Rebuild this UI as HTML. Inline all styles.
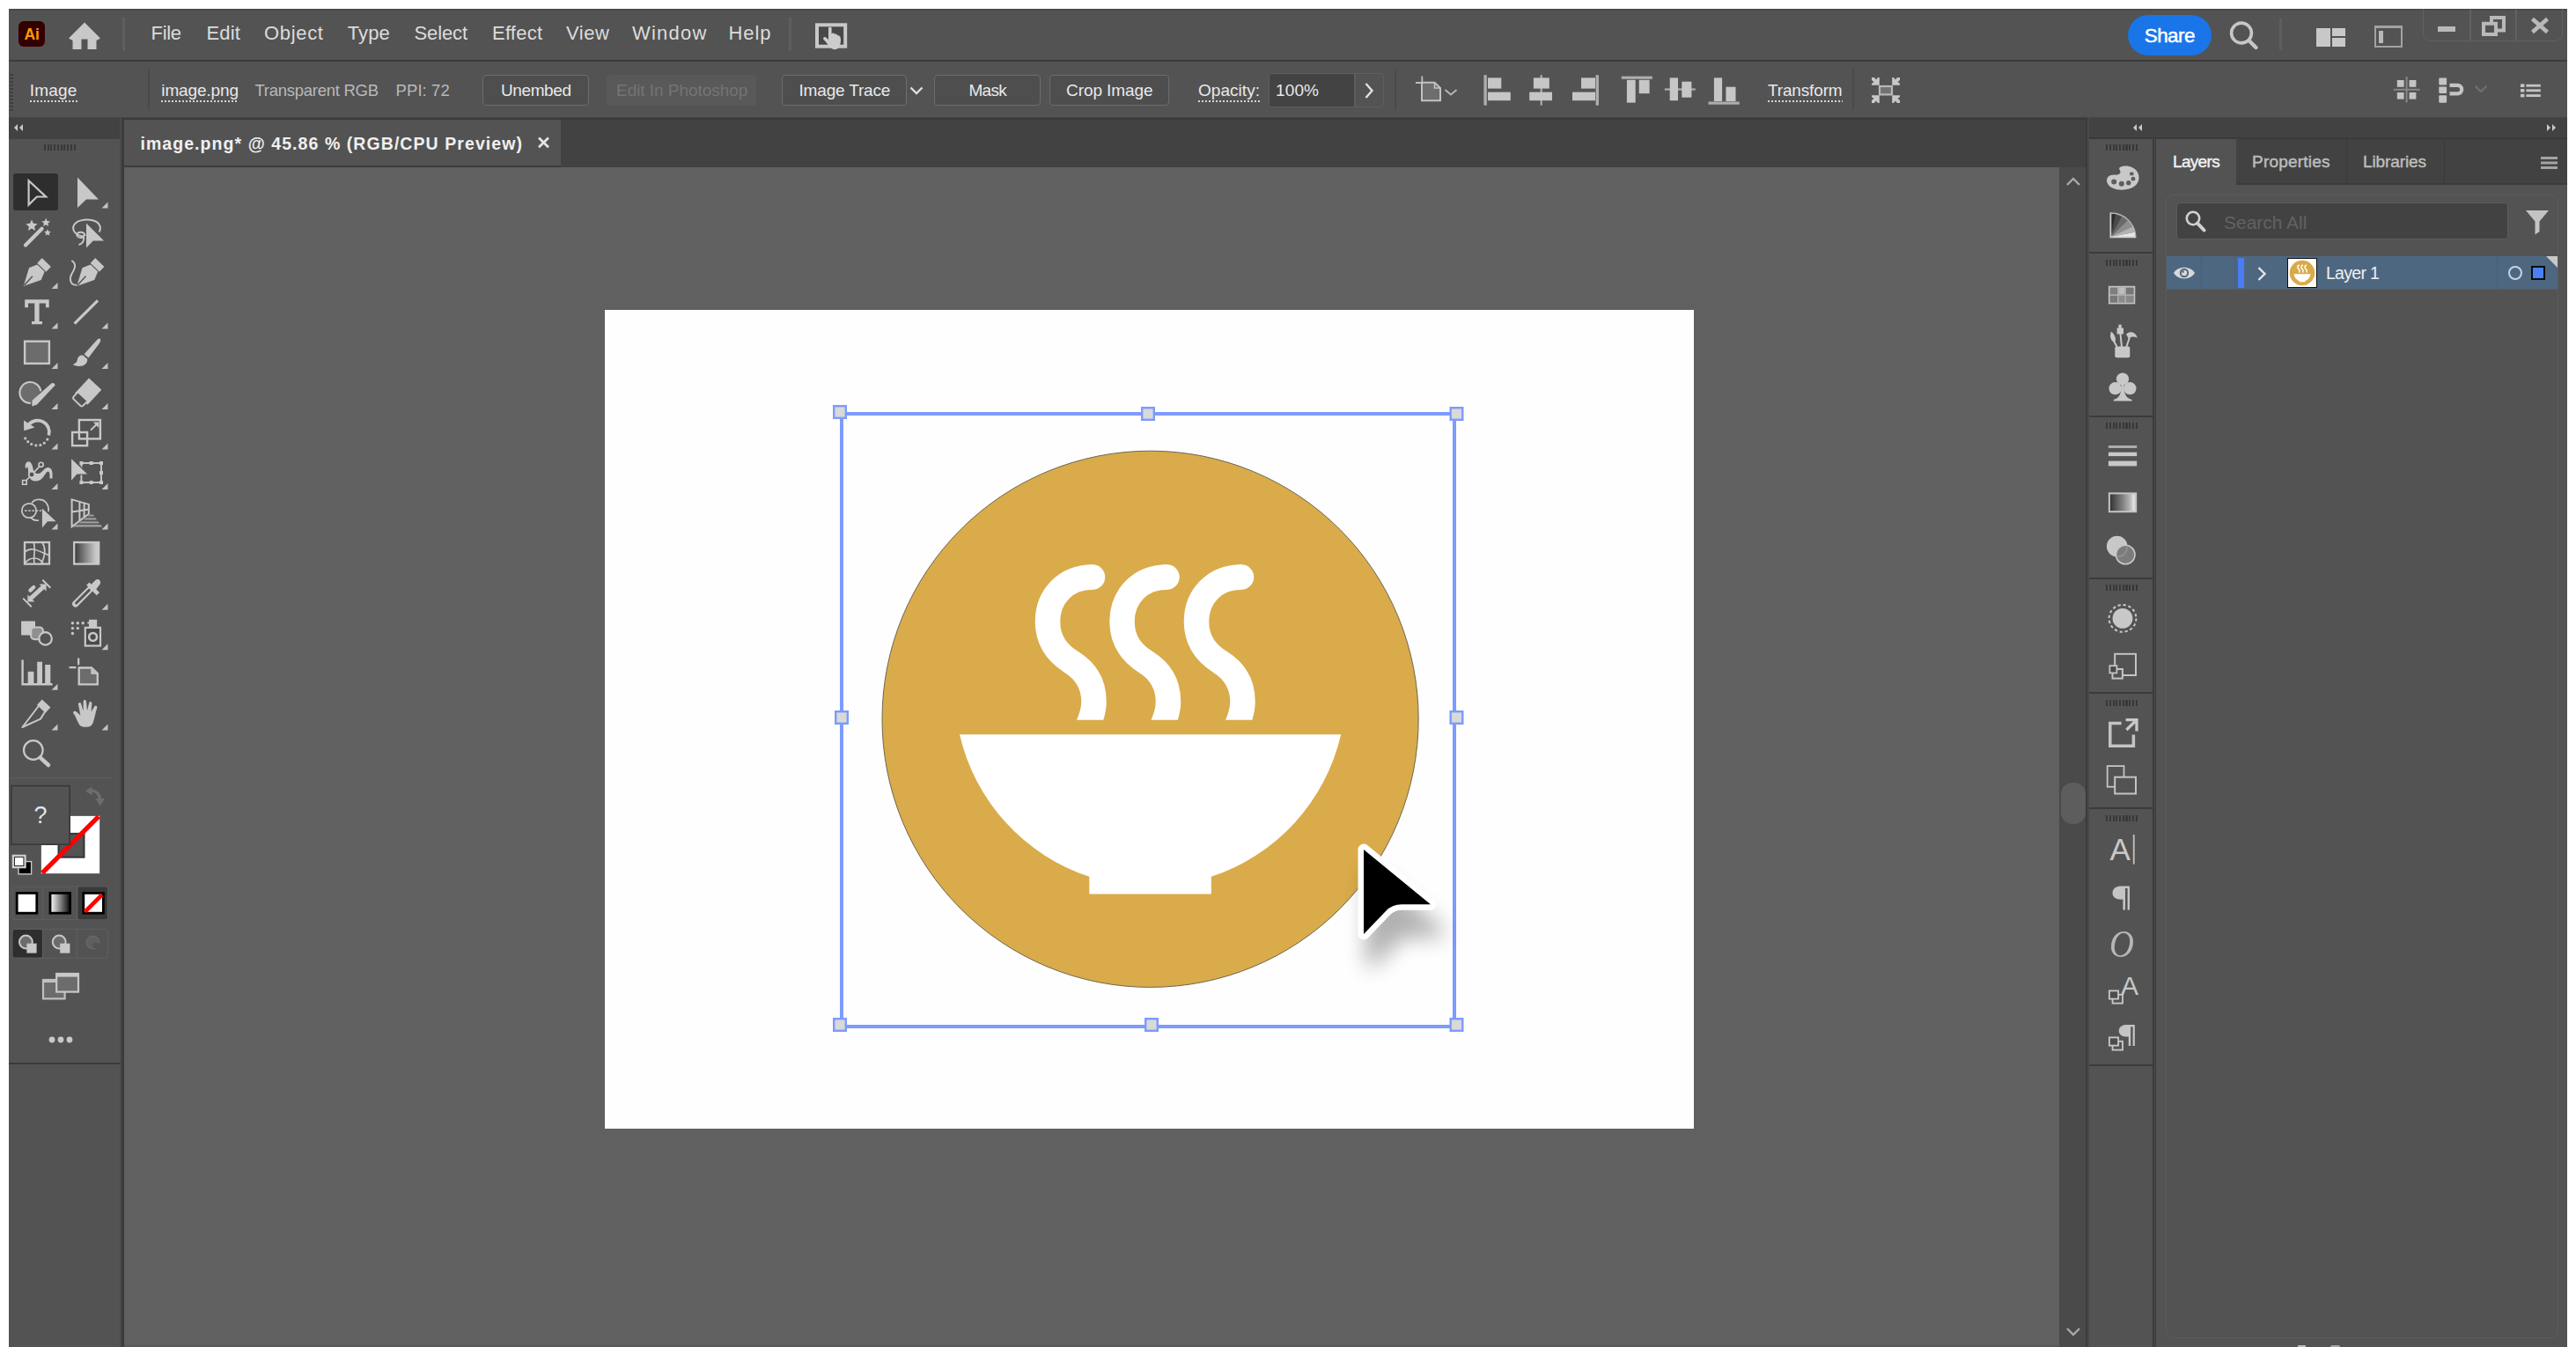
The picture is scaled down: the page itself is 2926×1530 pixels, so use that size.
<!DOCTYPE html>
<html lang="en">
<head>
<meta charset="utf-8">
<title>Adobe Illustrator - image.png</title>
<style>
html,body{margin:0;padding:0;}
body{width:2926px;height:1530px;background:#ffffff;position:relative;overflow:hidden;font-family:"Liberation Sans",sans-serif;}
.a{position:absolute;display:block;}
.t{position:absolute;white-space:pre;line-height:1;font-family:"Liberation Sans",sans-serif;}
.du{position:absolute;height:2px;background-image:repeating-linear-gradient(90deg,#d6d6d6 0,#d6d6d6 2px,transparent 2px,transparent 4px);}
svg{position:absolute;overflow:visible;}
.btn{position:absolute;box-sizing:border-box;border:1.5px solid #6d6d6d;border-radius:4px;background:#4e4e4e;}
.grip{position:absolute;height:7px;width:36px;background-image:repeating-linear-gradient(90deg,#383838 0,#383838 2px,transparent 2px,transparent 3.75px);}
.hl{position:absolute;background:#3b3b3b;}
</style>
</head>
<body>
<!-- application window -->
<div class="a" style="left:10px;top:11px;width:2906px;height:1519px;background:#535353;"></div>
<!-- top window edge -->
<div class="a" style="left:10px;top:10px;width:2906px;height:2px;background:#4a4a4a;"></div>
<!-- menu bar bottom line -->
<div class="hl" style="left:10px;top:68px;width:2906px;height:2px;"></div>
<!-- control bar bottom -->
<div class="hl" style="left:10px;top:133px;width:2906px;height:2px;background:#454545;"></div>

<!-- left toolbar header strip -->
<div class="a" style="left:10px;top:134px;width:127px;height:24px;background:#424242;"></div>
<!-- toolbar/document separator -->
<div class="a" style="left:136px;top:134px;width:3px;height:1396px;background:#4b4b4b;"></div>
<div class="a" style="left:138px;top:134px;width:3px;height:1396px;background:#3b3b3b;"></div>
<!-- toolbar bottom line -->
<div class="hl" style="left:10px;top:1207px;width:127px;height:2px;background:#3a3a3a;"></div>

<!-- document tab strip -->
<div class="a" style="left:141px;top:134px;width:2228px;height:56px;background:#424242;"></div>
<div class="a" style="left:141px;top:134px;width:496px;height:54px;background:#535353;border-top:1px solid #3d3d3d;box-sizing:border-box;"></div>
<div class="hl" style="left:141px;top:188px;width:496px;height:2px;background:#3c3c3c;"></div>
<div class="hl" style="left:141px;top:134px;width:2775px;height:2px;background:#3a3a3a;"></div>
<!-- canvas -->
<div class="a" style="left:141px;top:190px;width:2198px;height:1340px;background:#606060;"></div>
<!-- vertical scrollbar -->
<div class="a" style="left:2339px;top:190px;width:31px;height:1340px;background:#4a4a4a;"></div>
<div class="a" style="left:2341px;top:889px;width:28px;height:47px;border-radius:13px;background:#5d5d5d;"></div>
<svg style="left:2346px;top:200px" width="18" height="12"><path d="M2 10 L9 3 L16 10" fill="none" stroke="#a8a8a8" stroke-width="2.4"/></svg>
<svg style="left:2346px;top:1507px" width="18" height="12"><path d="M2 2 L9 9 L16 2" fill="none" stroke="#a8a8a8" stroke-width="2.4"/></svg>

<!-- right dock -->
<div class="a" style="left:2369px;top:134px;width:2px;height:1396px;background:#3b3b3b;"></div>
<div class="a" style="left:2371px;top:134px;width:2px;height:1396px;background:#494949;"></div>
<div class="a" style="left:2373px;top:134px;width:543px;height:24px;background:#424242;"></div>
<div class="hl" style="left:2373px;top:156px;width:543px;height:2px;background:#3a3a3a;"></div>
<div class="a" style="left:2445px;top:158px;width:1.5px;height:1372px;background:#3b3b3b;"></div>
<div class="a" style="left:2446.5px;top:158px;width:1px;height:1372px;background:#4b4b4b;"></div>
<div class="a" style="left:2447.5px;top:158px;width:1.5px;height:1372px;background:#3b3b3b;"></div>
<!-- dock group separators -->
<div class="hl" style="left:2373px;top:286px;width:73px;height:2px;"></div>
<div class="hl" style="left:2373px;top:472px;width:73px;height:2px;"></div>
<div class="hl" style="left:2373px;top:656px;width:73px;height:2px;"></div>
<div class="hl" style="left:2373px;top:786px;width:73px;height:2px;"></div>
<div class="hl" style="left:2373px;top:917px;width:73px;height:2px;"></div>
<div class="hl" style="left:2373px;top:1209px;width:73px;height:2px;"></div>
<!-- dock grips -->
<div class="grip" style="left:2392px;top:164px;"></div>
<div class="grip" style="left:2392px;top:295px;"></div>
<div class="grip" style="left:2392px;top:480px;"></div>
<div class="grip" style="left:2392px;top:664px;"></div>
<div class="grip" style="left:2392px;top:795px;"></div>
<div class="grip" style="left:2392px;top:926px;"></div>

<!-- panel tab bar -->
<div class="a" style="left:2449px;top:158px;width:467px;height:52px;background:#424242;"></div>
<div class="a" style="left:2449px;top:158px;width:91px;height:54px;background:#535353;"></div>
<div class="a" style="left:2665px;top:158px;width:1px;height:52px;background:#3a3a3a;"></div>
<div class="a" style="left:2776px;top:158px;width:1px;height:52px;background:#3a3a3a;"></div>
<div class="hl" style="left:2540px;top:208px;width:376px;height:2px;background:#3c3c3c;"></div>
<!-- panel menu icon -->
<div class="a" style="left:2886px;top:178px;width:19px;height:2.5px;background:#a4a4a4;box-shadow:0 5.5px 0 #a4a4a4,0 11px 0 #a4a4a4;"></div>

<!-- layers panel body box -->
<div class="a" style="left:2460px;top:221px;width:446px;height:1299px;box-sizing:border-box;border:1.5px solid #5b5b5b;border-radius:8px;"></div>
<!-- search field -->
<div class="a" style="left:2472px;top:230px;width:377px;height:42px;box-sizing:border-box;border:1.5px solid #5c5c5c;border-radius:4px;background:#424242;"></div>
<svg style="left:2480px;top:238px" width="30" height="28" viewBox="0 0 30 28"><circle cx="11" cy="10" r="7.2" fill="none" stroke="#d0d0d0" stroke-width="2.6"/><path d="M16 15.5 L23.5 23.5" stroke="#d0d0d0" stroke-width="4" stroke-linecap="round"/></svg>
<!-- filter icon -->
<svg style="left:2868px;top:238px" width="28" height="30" viewBox="0 0 28 30"><path d="M1 1 H27 L16.5 13.5 V25 L11.5 28.5 V13.5 Z" fill="#c4c4c4"/></svg>
<!-- layer row -->
<div class="a" style="left:2461px;top:291px;width:444px;height:38px;background:#4e6781;"></div>
<div class="a" style="left:2461px;top:328px;width:444px;height:1px;background:#5a5a5a;"></div>
<div class="a" style="left:2499px;top:291px;width:2px;height:37px;background:#4a627b;"></div>
<div class="a" style="left:2538px;top:291px;width:2px;height:37px;background:#4a627b;"></div>
<div class="a" style="left:2835px;top:291px;width:2px;height:37px;background:#4a627b;"></div>
<div class="a" style="left:2542px;top:293px;width:7px;height:34px;background:#4a7cf5;"></div>
<!-- eye -->
<svg style="left:2468px;top:300px" width="26" height="20" viewBox="0 0 26 20"><path d="M1 10 C6 1.5 20 1.5 25 10 C20 18.5 6 18.5 1 10 Z" fill="#d8d8d8"/><circle cx="13" cy="10" r="5.2" fill="#4e6781"/><circle cx="13" cy="10" r="3.2" fill="#d8d8d8"/><circle cx="11.6" cy="8.6" r="1.3" fill="#4e6781"/></svg>
<!-- chevron -->
<svg style="left:2563px;top:302px" width="12" height="18"><path d="M2.5 2 L9.5 9 L2.5 16" fill="none" stroke="#e6e6e6" stroke-width="2.4"/></svg>
<!-- thumbnail -->
<div class="a" style="left:2598px;top:293px;width:34px;height:34px;box-sizing:border-box;border:1.5px solid #101010;background:#ffffff;"></div>
<svg style="left:2600px;top:295px" width="30" height="30" viewBox="0 0 30 30"><circle cx="15" cy="15" r="14.3" fill="#d9aa4a"/><path d="M5.5 16.2 H24.5 C23.8 21 20.5 23.4 18.3 24 V25.2 H11.7 V24 C9.5 23.4 6.2 21 5.5 16.2 Z" fill="#fff"/><path d="M11.3 6.2 C9.2 7 9.6 9.6 11 10.6 C12 11.4 12.2 12.6 11.8 14 M15.4 6.2 C13.3 7 13.7 9.6 15.1 10.6 C16.1 11.4 16.3 12.6 15.9 14 M19.5 6.2 C17.4 7 17.8 9.6 19.2 10.6 C20.2 11.4 20.4 12.6 20 14" fill="none" stroke="#fff" stroke-width="1.5" stroke-linecap="round"/></svg>
<!-- target circle + selection square -->
<div class="a" style="left:2849px;top:302px;width:16px;height:16px;box-sizing:border-box;border:2px solid #c9d3de;border-radius:50%;"></div>
<div class="a" style="left:2875px;top:302px;width:16px;height:16px;box-sizing:border-box;border:2px solid #0b0b0b;background:#4a80f7;"></div>
<svg style="left:2892px;top:291px" width="13" height="13"><path d="M0 0 H13 V13 Z" fill="#c8c8c8"/></svg>

<!-- dock header arrows -->
<svg style="left:2422px;top:140px" width="12" height="10"><path d="M5 1 L1 5 L5 9 Z M11 1 L7 5 L11 9 Z" fill="#c9c9c9"/></svg>
<svg style="left:2892px;top:140px" width="12" height="10"><path d="M1 1 L5 5 L1 9 Z M7 1 L11 5 L7 9 Z" fill="#c9c9c9"/></svg>
<svg style="left:15px;top:140px" width="12" height="10"><path d="M5 1 L1 5 L5 9 Z M11 1 L7 5 L11 9 Z" fill="#c9c9c9"/></svg>
<div class="grip" style="left:50px;top:164px;"></div>
<!-- doc tab close -->
<svg style="left:610px;top:155px" width="15" height="14" viewBox="0 0 15 14"><path d="M2 1.6 L13 12.2 M13 1.6 L2 12.2" stroke="#e4e4e4" stroke-width="2.8"/></svg>
<!-- bottom slivers -->
<div class="a" style="left:141px;top:1528px;width:2198px;height:2px;background:#585858;"></div>
<div class="a" style="left:2610px;top:1528px;width:9px;height:2px;background:#bdbdbd;"></div>
<div class="a" style="left:2647px;top:1528px;width:11px;height:2px;border-radius:5px 5px 0 0;background:#a9a9a9;"></div>
<!-- artboard -->
<div class="a" style="left:687px;top:352px;width:1237px;height:930px;background:#fefefe;"></div>
<svg style="left:0;top:0" width="2926" height="1530" viewBox="0 0 2926 1530">
<defs>
<filter id="cs" x="-50%" y="-50%" width="220%" height="220%"><feGaussianBlur stdDeviation="12"/></filter>
</defs>
<!-- gold disc -->
<circle cx="1306.6" cy="816.8" r="304.6" fill="#d9ab4a" stroke="#6f6651" stroke-width="1"/>
<!-- steam -->
<defs><g id="st"><path d="M1241,655.5 C1210,655.5 1190,678 1190,706 C1190,730 1203,743 1217,752 C1233,762 1242.5,776 1242.5,797 C1242.5,808 1239.5,816 1235,826" fill="none" stroke="#ffffff" stroke-width="28.5"/><circle cx="1241" cy="655.5" r="14.25" fill="#ffffff"/></g></defs>
<clipPath id="stc"><rect x="1100" y="600" width="420" height="217.8"/></clipPath>
<g clip-path="url(#stc)"><use href="#st"/><use href="#st" x="84.5"/><use href="#st" x="169"/></g>
<!-- bowl -->
<path d="M1090,834.3 H1523.2 A222.8 222.8 0 0 1 1375.8,995.8 V1015.6 H1237.3 V995.8 A222.8 222.8 0 0 1 1090,834.3 Z" fill="#ffffff"/>
<!-- selection box -->
<g fill="none" stroke="#7c9bff" stroke-width="4">
<path d="M956,470 H1652 V1166 H956 Z"/>
</g>
<g fill="#d9d9d9" stroke="#7c9bff" stroke-width="2.4">
<rect x="947.2" y="461.2" width="13.6" height="13.6"/>
<rect x="1297.2" y="463.2" width="13.6" height="13.6"/>
<rect x="1647.7" y="463.2" width="13.6" height="13.6"/>
<rect x="949.2" y="808.2" width="13.6" height="13.6"/>
<rect x="1647.7" y="808.2" width="13.6" height="13.6"/>
<rect x="947.2" y="1157.2" width="13.6" height="13.6"/>
<rect x="1301.2" y="1157.2" width="13.6" height="13.6"/>
<rect x="1647.7" y="1157.2" width="13.6" height="13.6"/>
</g>
<!-- big pointer -->
<path d="M1549,965 L1625,1027.3 L1592,1027.3 Q1581,1027.3 1574,1035 L1549,1061 Z" transform="translate(9,31)" fill="#000" stroke="#000" stroke-width="13" stroke-linejoin="round" opacity="0.30" filter="url(#cs)"/>
<path d="M1549,965 L1625,1027.3 L1592,1027.3 Q1581,1027.3 1574,1035 L1549,1061 Z" fill="#000" stroke="#ffffff" stroke-width="13" stroke-linejoin="round" paint-order="stroke"/>
</svg>
<!-- ===== app bar icons ===== -->
<div class="a" style="left:21px;top:24px;width:30px;height:29px;border-radius:6px;background:#330000;"></div>
<span class="t" style="left:27.6px;top:30.6px;font-size:17.5px;font-weight:700;color:#ff9a00;letter-spacing:-0.2px;">Ai</span>
<svg style="left:77px;top:25px" width="38" height="32" viewBox="0 0 38 32"><path d="M19 0.5 L37 18.5 L32.5 21 V31 H22.5 V19.5 H15.5 V31 H5.5 V21 L1 18.5 Z" fill="#c8c8c8"/></svg>
<div class="a" style="left:139px;top:20px;width:3px;height:38px;background:#5e5e5e;"></div>
<div class="a" style="left:896px;top:20px;width:3px;height:38px;background:#5e5e5e;"></div>
<!-- touch workspace icon -->
<svg style="left:924px;top:24px" width="42" height="36" viewBox="0 0 42 36">
<rect x="4" y="4.3" width="32.2" height="24.4" fill="#484848" stroke="#c8c8c8" stroke-width="4"/>
<path d="M17 7.5 Q18.8 5.5 20.6 7.5 V14.5 Q22.5 12.2 24.2 14.8 Q26.2 13.6 27.6 16.4 Q29.6 15.8 30.6 18.6 C31.6 22 30.8 26 29 30 Q26 33.2 21.5 31.6 C18 30 15.5 25 11.2 20.6 Q10.6 17.6 13.6 18 L17 21 Z" fill="#cccccc"/>
</svg>
<!-- share -->
<div class="a" style="left:2417px;top:17px;width:95px;height:46px;border-radius:23px;background:#1a75e8;"></div>
<!-- search -->
<svg style="left:2530px;top:22px" width="38" height="38" viewBox="0 0 38 38"><circle cx="16" cy="15.5" r="11.4" fill="none" stroke="#c6c6c6" stroke-width="3.6"/><path d="M24.5 24 L32.5 32" stroke="#c6c6c6" stroke-width="4.4" stroke-linecap="round"/></svg>
<div class="a" style="left:2589px;top:21px;width:3px;height:36px;background:#5e5e5e;"></div>
<!-- workspace switcher -->
<div class="a" style="left:2631px;top:32px;width:16px;height:21px;background:#c8c8c8;"></div>
<div class="a" style="left:2649px;top:32px;width:15px;height:9px;background:#c8c8c8;"></div>
<div class="a" style="left:2649px;top:43px;width:15px;height:10px;background:#c8c8c8;"></div>
<!-- arrange docs -->
<div class="a" style="left:2697px;top:29px;width:32px;height:25px;box-sizing:border-box;border:2.5px solid #a2a2a2;border-top-width:3.5px;"></div>
<div class="a" style="left:2702px;top:35px;width:5px;height:14px;background:#b9b9b9;"></div>
<!-- window controls -->
<div class="a" style="left:2752px;top:6px;width:159px;height:41px;box-sizing:border-box;border:1.5px solid #616161;border-radius:0 0 9px 9px;"></div>
<div class="a" style="left:10px;top:0px;width:2906px;height:10px;background:#ffffff;"></div>
<div class="a" style="left:2805px;top:11px;width:1.5px;height:35px;background:#616161;"></div>
<div class="a" style="left:2857px;top:11px;width:1.5px;height:35px;background:#616161;"></div>
<div class="a" style="left:2769px;top:30px;width:20px;height:6px;background:#b9b9b9;"></div>
<svg style="left:2817px;top:16px" width="32" height="28" viewBox="0 0 32 28"><rect x="13" y="4" width="14" height="14.5" fill="none" stroke="#b9b9b9" stroke-width="4"/><rect x="4" y="10.8" width="14" height="12.2" fill="#535353" stroke="#b9b9b9" stroke-width="4"/></svg>
<svg style="left:2873px;top:19px" width="24" height="20" viewBox="0 0 24 20"><path d="M3.5 2.5 L20.5 17.5 M20.5 2.5 L3.5 17.5" stroke="#b9b9b9" stroke-width="4.6"/></svg>
<!-- ===== control bar ===== -->
<div class="a" style="left:11px;top:84px;width:4px;height:44px;background-image:repeating-linear-gradient(180deg,#3f3f3f 0,#3f3f3f 2px,transparent 2px,transparent 4px);"></div>
<div class="a" style="left:168px;top:79px;width:2px;height:46px;background:#4a4a4a;"></div>
<div class="btn" style="left:548px;top:85px;width:121px;height:35px;"></div>
<div class="a" style="left:689px;top:85px;width:170px;height:35px;border-radius:4px;background:#595959;"></div>
<div class="btn" style="left:888px;top:85px;width:142px;height:35px;"></div>
<svg style="left:1033px;top:97px" width="16" height="12"><path d="M1.5 2.5 L8 9 L14.5 2.5" fill="none" stroke="#dedede" stroke-width="2.4"/></svg>
<div class="btn" style="left:1061px;top:85px;width:121px;height:35px;"></div>
<div class="btn" style="left:1192px;top:85px;width:136px;height:35px;"></div>
<!-- opacity -->
<div class="a" style="left:1441px;top:83px;width:131px;height:39px;box-sizing:border-box;border:1.5px solid #5e5e5e;border-radius:4px;background:#535353;"></div>
<div class="a" style="left:1442px;top:84px;width:96px;height:37px;background:#434343;border-radius:3px 0 0 3px;"></div>
<div class="a" style="left:1538px;top:84px;width:1.5px;height:37px;background:#5e5e5e;"></div>
<svg style="left:1549px;top:93px" width="12" height="20"><path d="M2.5 2 L9.5 10 L2.5 18" fill="none" stroke="#e2e2e2" stroke-width="2.4"/></svg>
<div class="a" style="left:1584px;top:79px;width:2px;height:46px;background:#4a4a4a;"></div>
<!-- doc setup -->
<svg style="left:1606px;top:84px" width="52" height="36" viewBox="0 0 52 36">
<path d="M9.3 2.5 V9 M2 10 H8" stroke="#bdbdbd" stroke-width="1.8" fill="none"/>
<path d="M9 9.8 H23.5 L30 16 V30.3 H9 Z" fill="#6e6e6e" stroke="#c2c2c2" stroke-width="2"/>
<path d="M23.5 9.8 V16 H30" fill="none" stroke="#c2c2c2" stroke-width="1.6"/>
<path d="M35.5 18 L42 23.5 L48.5 18" fill="none" stroke="#b5b5b5" stroke-width="2"/>
</svg>
<!-- align icons -->
<svg style="left:0;top:0" width="2926" height="140" viewBox="0 0 2926 140">
<g fill="#c6c6c6">
<rect x="1685.4" y="85.2" width="3.4" height="34.5" fill="#adadad"/><rect x="1690" y="88.4" width="15.3" height="12.2"/><rect x="1690" y="104.6" width="25.8" height="9.6"/>
<rect x="1749.6" y="85.2" width="2.2" height="34.5" fill="#adadad"/><rect x="1741.9" y="88.4" width="17.9" height="12.2"/><rect x="1737.2" y="104.6" width="25.8" height="9.6"/>
<rect x="1812.6" y="85.2" width="3.4" height="34.5" fill="#adadad"/><rect x="1796" y="88.4" width="16" height="12.2"/><rect x="1786" y="104.6" width="26" height="9.6"/>
<rect x="1841.8" y="86.6" width="35" height="3.2" fill="#adadad"/><rect x="1847.9" y="90.8" width="9.8" height="25.8"/><rect x="1861.7" y="90.8" width="11.9" height="15.4"/>
<rect x="1890.8" y="100.4" width="35" height="2.2" fill="#adadad"/><rect x="1896.7" y="88.4" width="9.3" height="25.8"/><rect x="1910.3" y="92.7" width="11.1" height="18"/>
<rect x="1940.5" y="115.5" width="35.3" height="3.2" fill="#adadad"/><rect x="1946.9" y="88.4" width="9.2" height="26.6"/><rect x="1960.4" y="98.7" width="11.1" height="16.3"/>
</g>
<!-- isolate -->
<rect x="2104" y="79" width="2" height="46" fill="#4a4a4a"/>
<rect x="2135" y="98" width="14" height="9.4" fill="#727272" stroke="#b8b8b8" stroke-width="2.2"/>
<g fill="#c8c8c8">
<path d="M2126 88 l3 0 l2 2.5 l2 -2.5 l1.8 0 l0 8.8 l-8.8 0 l0 -1.8 l2.5 -2 l-2.5 -2 z"/>
<path d="M2158 88 l-3 0 l-2 2.5 l-2 -2.5 l-1.8 0 l0 8.8 l8.8 0 l0 -1.8 l-2.5 -2 l2.5 -2 z"/>
<path d="M2126 117 l3 0 l2 -2.5 l2 2.5 l1.8 0 l0 -8.8 l-8.8 0 l0 1.8 l2.5 2 l-2.5 2 z"/>
<path d="M2158 117 l-3 0 l-2 -2.5 l-2 2.5 l-1.8 0 l0 -8.8 l8.8 0 l0 1.8 l-2.5 2 l2.5 2 z"/>
</g>
<!-- right controls -->
<g fill="#c4c4c4">
<rect x="2722.8" y="91" width="7.8" height="7.8"/><rect x="2736.6" y="91" width="7.8" height="7.8"/><rect x="2722.8" y="105" width="7.8" height="7.6"/><rect x="2736.6" y="105" width="7.8" height="7.6"/>
<rect x="2732.6" y="87" width="2" height="29.5" fill="#878787"/><rect x="2718.6" y="100.8" width="30" height="2" fill="#878787"/>
<rect x="2770.3" y="88.6" width="8.8" height="8" rx="1"/><rect x="2770.3" y="98.6" width="8.8" height="7.4" rx="1"/><rect x="2770.3" y="108.3" width="8.8" height="8.4" rx="1"/>
</g>
<path d="M2782.5 96.9 H2791.5 A4.7 4.7 0 0 1 2791.5 106.3 H2782.5" fill="none" stroke="#c4c4c4" stroke-width="4.2"/>
<path d="M2811.5 97.8 L2818 104 L2824.5 97.8" fill="none" stroke="#6f6f6f" stroke-width="2"/>
<g fill="#c4c4c4"><rect x="2863" y="95.4" width="4.4" height="3.6"/><rect x="2869.4" y="95.8" width="16.4" height="2.8"/><rect x="2863" y="101" width="4.4" height="3.6"/><rect x="2869.4" y="101.4" width="16.4" height="2.8"/><rect x="2863" y="106.8" width="4.4" height="3.6"/><rect x="2869.4" y="107.2" width="16.4" height="2.8"/></g>
</svg>
<!-- ===== left toolbar ===== -->
<div class="a" style="left:15px;top:197px;width:51px;height:42px;border-radius:3px;background:#2e2e2e;"></div>
<svg style="left:0;top:0" width="141" height="1220" viewBox="0 0 141 1220">
<defs>
<linearGradient id="gr1" x1="0" x2="1" y1="0" y2="0"><stop offset="0" stop-color="#383838"/><stop offset="0.85" stop-color="#c4c4c4"/><stop offset="1" stop-color="#cfcfcf"/></linearGradient>
<linearGradient id="gr2" x1="0" x2="1" y1="0" y2="0"><stop offset="0" stop-color="#ffffff"/><stop offset="1" stop-color="#0a0a0a"/></linearGradient>
<path id="tri" d="M7 0 V7 H0 Z" fill="#c4c4c4"/>
<g id="pen"><path d="M26.7 324.9 L33 304.3 L42.3 300.6 L50.7 308.4 L46.7 317.9 Z" fill="#c8c8c8"/><path d="M43 298.8 L47.7 294 L57 303 L52.4 307.8 Z" fill="#c8c8c8" stroke="#c8c8c8" stroke-width="1.2" stroke-linejoin="round"/><path d="M27.5 324 L36.9 313.8" stroke="#535353" stroke-width="1.5"/></g>
</defs>
<g fill="#c8c8c8">
<!-- row1: selection / direct selection -->
<path d="M32.6 205.2 V232.6 L41.9 223.5 H52.2 Z" fill="none" stroke="#c8c8c8" stroke-width="2.2" stroke-linejoin="miter"/>
<path d="M88 201.5 V236 L98 226.4 H112 Z"/>
<use href="#tri" x="115.5" y="229.5"/>
<!-- row2: magic wand / lasso -->
<path d="M29 278.5 L47.6 259.8" stroke="#c8c8c8" stroke-width="4.2" stroke-linecap="round"/>
<path d="M36 249.5 l1.9 4.3 l4.7 0.5 l-3.5 3.1 l1 4.6 l-4.1 -2.4 l-4.1 2.4 l1 -4.6 l-3.5 -3.1 l4.7 -0.5 z"/>
<path d="M52.2 247.8 l1.4 3.2 l3.5 0.4 l-2.6 2.3 l0.7 3.4 l-3 -1.8 l-3 1.8 l0.7 -3.4 l-2.6 -2.3 l3.5 -0.4 z"/>
<path d="M54 260.3 l1.1 2.5 l2.7 0.3 l-2 1.8 l0.6 2.7 l-2.4 -1.4 l-2.4 1.4 l0.6 -2.7 l-2 -1.8 l2.7 -0.3 z"/>
<path d="M96 268.5 C86 268 82 262 83.5 257 C85.5 250.5 97 248 106 250.5 C113.5 252.5 115.5 259 112.5 263.5" fill="none" stroke="#c8c8c8" stroke-width="2"/>
<path d="M96.5 268 C96 263 89 262.5 87.5 266 C86.3 269.5 93 271.5 95 268.5 C96 272 94.5 277 89.5 278" fill="none" stroke="#c8c8c8" stroke-width="1.9"/>
<path d="M98 253.6 V281.5 L105.8 273.4 H118 Z"/>
<!-- row3: pen / curvature -->
<use href="#pen"/><use href="#tri" x="58.5" y="321"/>
<use href="#pen" x="60.5"/>
<path d="M81.3 296 C88 300 84.5 306 81.5 311 C78.5 316.5 79.5 324 87 323.8" fill="none" stroke="#c8c8c8" stroke-width="1.9"/>
<!-- row4: type / line -->
<path d="M28.2 340.3 H55.7 V349.2 H52 V344.6 H44.6 V365 H48 V368.2 H36 V365 H39.3 V344.6 H32 V349.2 H28.2 Z"/>
<use href="#tri" x="58.5" y="366.5"/>
<path d="M84.6 367.6 L111 341.4" stroke="#c8c8c8" stroke-width="3.2"/>
<use href="#tri" x="115.5" y="366.5"/>
<!-- row5: rectangle / paintbrush -->
<rect x="28.1" y="387.7" width="27.8" height="25.2" fill="#6c6c6c" stroke="#c8c8c8" stroke-width="2.4"/>
<use href="#tri" x="58.5" y="412"/>
<path d="M113.5 384.6 C115 386 114 388.5 112.5 390.5 L100.5 406.5 L95.6 402.3 L110 386.3 C111 385 112.4 384 113.5 384.6 Z"/>
<path d="M94.3 403.6 L99.3 408 C99.5 413 95 416.3 89.5 416 C86.5 415.8 84 415 82.8 414 C86 413 87.6 411 88 408 C88.6 404.5 91.5 403 94.3 403.6 Z"/>
<use href="#tri" x="115.5" y="412"/>
<!-- row6: shaper / eraser -->
<path d="M35 458 A12 12 0 1 1 46.3 444.5" fill="#6c6c6c" stroke="#c8c8c8" stroke-width="2.1"/>
<path d="M38 453.3 L40.5 445 L46 444.2 Z" fill="#6c6c6c"/>
<path d="M58.6 435.3 Q61.5 434.2 62.7 437.4 L41.8 459.8 L36.2 461.5 L36.6 454.8 Z"/>
<use href="#tri" x="58.5" y="458"/>
<path d="M101 429.4 L115.3 442.7 L99.5 459.8 L85.2 446.5 Z"/>
<path d="M88.6 445.2 L99.6 455.6 L94 461 Q92.8 462 91.6 461 L83.4 453.2 Q82.4 452 83.4 450.8 Z" fill="#535353" stroke="#c8c8c8" stroke-width="1.9"/>
<use href="#tri" x="115.5" y="458"/>
<!-- row7: rotate / scale -->
<path d="M32.5 482.5 A13.2 13.2 0 0 1 55.4 494.6" fill="none" stroke="#c8c8c8" stroke-width="3.6"/>
<path d="M27 477.4 L39.4 485.6 L27.2 489.2 Z"/>
<g><rect x="27.4" y="496.6" width="2.7" height="2.7"/><rect x="30.4" y="500.4" width="2.7" height="2.7"/><rect x="34.4" y="503.2" width="2.7" height="2.7"/><rect x="39.5" y="504.6" width="2.7" height="2.7"/><rect x="44.5" y="504.2" width="2.7" height="2.7"/><rect x="48.9" y="501.9" width="2.7" height="2.7"/><rect x="52.5" y="497.8" width="2.7" height="2.7"/></g>
<use href="#tri" x="58.5" y="503.5"/>
<rect x="89.9" y="477" width="24" height="21.4" fill="none" stroke="#c8c8c8" stroke-width="2.4"/>
<rect x="82.1" y="491" width="17" height="15.2" fill="none" stroke="#c8c8c8" stroke-width="2.4"/>
<path d="M103 488.6 L110 481.8" stroke="#c8c8c8" stroke-width="2"/><path d="M105.8 479.6 H112.3 V486 Z"/>
<use href="#tri" x="115.5" y="503.5"/>
<!-- row8: width/puppet / free transform -->
<path d="M29 532 C27.5 526 31.5 522.5 34.5 525 C38.5 529 36.5 537 42 538 C48 539 50 530 55.5 531.2 C60 532.3 59.8 538 59.5 543.5 L56.5 543.5 C56.6 539 56.6 535.8 54.6 535.6 C51.4 535.4 49.5 546.4 41 546.6 C33 546.8 32.4 539.5 32 534.5 C31.8 531.5 31.4 529.4 30.6 531 Z"/>
<path d="M28.6 547 L46 528.6" stroke="#c8c8c8" stroke-width="1.6"/>
<rect x="25.6" y="545.6" width="4.6" height="4.6" fill="#535353" stroke="#c8c8c8" stroke-width="1.6"/>
<circle cx="36" cy="539" r="3.3" fill="#535353" stroke="#c8c8c8" stroke-width="1.7"/>
<circle cx="46.6" cy="527.8" r="2.6" fill="#535353" stroke="#c8c8c8" stroke-width="1.6"/>
<use href="#tri" x="58.5" y="549"/>
<rect x="92.4" y="526" width="22.6" height="22" fill="none" stroke="#c8c8c8" stroke-width="1.9"/>
<g><rect x="90.4" y="524" width="4" height="4"/><rect x="101.7" y="524" width="4" height="4"/><rect x="113" y="524" width="4" height="4"/><rect x="113" y="535" width="4" height="4"/><rect x="90.4" y="546" width="4" height="4"/><rect x="101.7" y="546" width="4" height="4"/><rect x="113" y="546" width="4" height="4"/></g>
<path d="M80.5 519.8 V547.4 L87.6 539 H100.6 Z" stroke="#535353" stroke-width="1.2"/>
<use href="#tri" x="115.5" y="549"/>
<!-- row9: shape builder / perspective grid -->
<circle cx="33" cy="580" r="8.2" fill="none" stroke="#c8c8c8" stroke-width="1.8"/>
<path d="M36 571.5 C39 566.5 48 566 52 570.5 C54.5 573.5 55.6 577 55 581 M44 590.8 C40 591.6 36.6 590 35 587.6" fill="none" stroke="#c8c8c8" stroke-width="1.8"/>
<path d="M28 580 H47" stroke="#c8c8c8" stroke-width="1.5" stroke-dasharray="2.6 1.6"/>
<path d="M47.9 577.4 V599.4 L54 592.2 H63.6 Z"/>
<use href="#tri" x="58.5" y="594.5"/>
<path d="M81.6 567.4 L100.8 572.9 V583.8 L81.6 598.2 Z M90.4 570 V591.4 M95.6 571.4 V587.6 M81.6 581.4 L100.8 578.4" fill="none" stroke="#c8c8c8" stroke-width="2"/>
<path d="M102 584.4 H106 L107.2 586.6 H99.6 Z M97.6 588.2 H108.6 L110 590.6 H94.6 Z M92.4 592.2 H111.4 L113 594.6 H89.2 Z M86.6 596 H114.4 L116.2 598.6 H82.4 Z" fill="#9c9c9c"/>
<use href="#tri" x="115.5" y="594.5"/>
<!-- row10: mesh / gradient -->
<rect x="28" y="616" width="28" height="24.6" fill="none" stroke="#c8c8c8" stroke-width="2.3"/>
<path d="M28 627 C36 620 44 626 56 631 M28 640 C34 632 44 632 49 640 M38 616 C41 622 37.5 632 39 640 M48 616 C53 624 50 634 47 640" fill="none" stroke="#c8c8c8" stroke-width="1.7"/>
<rect x="84.2" y="616" width="28" height="24.6" fill="url(#gr1)" stroke="#c8c8c8" stroke-width="2.3"/>
<!-- row11: measure / eyedropper -->
<path d="M33.6 680.8 L50 665.8" stroke="#c8c8c8" stroke-width="5"/>
<path d="M44.6 663.4 H52.6 V671.4 Z M31.4 675.4 V683.4 H39.4 Z"/>
<path d="M48.3 658.8 L57.3 667.8 M26.2 679.6 L35.8 689.2" stroke="#c8c8c8" stroke-width="2"/>
<path d="M34.4 670.6 L38.2 667" stroke="#c8c8c8" stroke-width="4.4" stroke-linecap="round"/>
<path d="M101.6 670 L85.8 685.8" stroke="#c8c8c8" stroke-width="7.4" stroke-linecap="round"/>
<path d="M101.2 670.4 L86.6 685" stroke="#535353" stroke-width="3" stroke-linecap="round"/>
<path d="M98.2 664.6 L101.4 661.4 L113 673 L109.8 676.2 Z"/>
<path d="M102.6 664.8 L108.4 659 C111.4 656.4 115.6 659.8 113.6 663.6 L108.4 670.6 Z"/>
<use href="#tri" x="115.5" y="685.7"/>
<!-- row12: blend / symbol sprayer -->
<rect x="24.1" y="705.5" width="15.9" height="16"/>
<rect x="35.2" y="712.5" width="13.8" height="13.8" rx="4" fill="#8f8f8f" stroke="#c8c8c8" stroke-width="2.1"/>
<circle cx="51.6" cy="725.4" r="7.2" fill="#535353" stroke="#c8c8c8" stroke-width="2.2"/>
<rect x="96.8" y="712.9" width="17.2" height="20.6" fill="#4a4a4a" stroke="#c8c8c8" stroke-width="2.2"/>
<rect x="101" y="703.8" width="9.2" height="8.2"/><rect x="99.4" y="706.4" width="3" height="2.2"/>
<circle cx="105.6" cy="723.4" r="4.4" fill="none" stroke="#c8c8c8" stroke-width="2.6"/>
<g><circle cx="82.4" cy="707.7" r="1.7"/><circle cx="88.3" cy="707.7" r="1.7"/><circle cx="94.2" cy="707.7" r="1.7"/><circle cx="82.4" cy="713.6" r="1.7"/><circle cx="88.3" cy="713.6" r="1.7"/><circle cx="82.4" cy="719.5" r="1.7"/></g>
<use href="#tri" x="115.5" y="731.3"/>
<!-- row13: graph / artboard -->
<path d="M25.6 749.4 V777.2 H59.6" fill="none" stroke="#c8c8c8" stroke-width="2.4"/>
<rect x="31.7" y="762.8" width="6.7" height="13.2"/><rect x="42.2" y="751.7" width="5.8" height="24.3"/><rect x="51.2" y="755" width="6.1" height="21"/>
<use href="#tri" x="58.5" y="776.8"/>
<path d="M89.2 747.6 V755.2 M78.6 758.2 H86.4" stroke="#c8c8c8" stroke-width="2.2"/>
<path d="M89.7 758.5 H104 L110.8 765 V777.3 H89.7 Z" fill="#6c6c6c" stroke="#c8c8c8" stroke-width="2.3"/>
<path d="M104 758.5 V765 H110.8" fill="#bdbdbd" stroke="#c8c8c8" stroke-width="1.4"/>
<!-- row14: slice / hand -->
<path d="M25.4 826 L44.6 801 L51.4 808 L46 816.6 Z" fill="none" stroke="#c8c8c8" stroke-width="2" stroke-linejoin="round"/>
<path d="M47.8 794.6 L57.4 803.6 L51.6 809.8 L42 800.8 Z"/>
<use href="#tri" x="58.5" y="822.4"/>
<path d="M90.4 823.4 C87 818 86 813 83.4 810.4 C82.4 808.4 84.4 807.2 86.4 808.2 C88.8 809.6 90.2 811.6 91.4 812.8 L89 800.2 C88.6 797.6 91.4 797 92.2 799.4 L94.6 807.6 L94.6 797 C94.6 794.4 97.8 794.4 98 797 L99 807.2 L101.2 798.4 C101.8 796 104.6 796.6 104.4 799.2 L103.6 808.6 L107.2 802.6 C108.4 800.6 111 801.8 110.2 804.2 C108.4 809.6 107.6 815.4 105.6 821 C104.4 824.6 101.6 825.8 98 825.8 C94.8 825.8 92.2 825.4 90.4 823.4 Z"/>
<use href="#tri" x="115.5" y="822.4"/>
<!-- row15: zoom -->
<circle cx="37.8" cy="852" r="10.8" fill="none" stroke="#c8c8c8" stroke-width="2.2"/>
<path d="M45.8 860.6 L55 869" stroke="#c8c8c8" stroke-width="4.6" stroke-linecap="round"/>
</g>
<!-- separator -->
<rect x="11" y="883" width="116" height="1.4" fill="#5c5c5c"/>
<!-- swap arrow -->
<path d="M99 899 C106 896 113 900 113.5 908" fill="none" stroke="#6d6d6d" stroke-width="3.4"/>
<path d="M97 898.6 L104.4 893.4 L104.8 903.4 Z M108.6 907 H118.8 L113.8 915.6 Z" fill="#6d6d6d"/>
<!-- stroke swatch -->
<rect x="46.5" y="926.5" width="67" height="66" fill="#ffffff" stroke="#6a6a6a" stroke-width="1"/>
<rect x="66.6" y="947" width="28.8" height="26.6" fill="#535353" stroke="#383838" stroke-width="2.2"/>
<path d="M48 991.6 L112 927.4" stroke="#ff0000" stroke-width="5.2"/>
<!-- fill swatch -->
<rect x="12.8" y="892.6" width="66.4" height="66.6" fill="#535353" stroke="#383838" stroke-width="1.6"/>
<!-- default fill/stroke -->
<rect x="21" y="978.6" width="14.6" height="14.2" fill="#000" stroke="#c8c8c8" stroke-width="1.4"/>
<rect x="14.4" y="971.4" width="14.6" height="14.2" fill="#fff" stroke="#c8c8c8" stroke-width="1.4"/>
<rect x="16.4" y="973.4" width="10.6" height="10.2" fill="#fff" stroke="#2a2a2a" stroke-width="1.2"/>
<!-- color / gradient / none -->
<rect x="14" y="1007" width="108.4" height="37.6" rx="3" fill="none" stroke="#5d5d5d" stroke-width="1.2"/>
<rect x="88.6" y="1007.6" width="33.4" height="36.6" rx="2" fill="#3a3a3a"/>
<path d="M48.6 1007 V1044.6 M87.4 1007 V1044.6" stroke="#5d5d5d" stroke-width="1.2"/>
<rect x="19.2" y="1014.4" width="22.6" height="22.8" fill="#ffffff" stroke="#000" stroke-width="2.8"/>
<rect x="57" y="1014.4" width="22.6" height="22.8" fill="url(#gr2)" stroke="#000" stroke-width="2.8"/>
<rect x="94.8" y="1014.4" width="22.6" height="22.8" fill="#ffffff" stroke="#000" stroke-width="2.8"/>
<path d="M96.6 1035.6 L115.8 1016.4" stroke="#ff0000" stroke-width="4.6"/>
<!-- draw modes -->
<rect x="14" y="1055.4" width="108.4" height="32.8" rx="3" fill="none" stroke="#5d5d5d" stroke-width="1.2"/>
<rect x="14.6" y="1056" width="33.4" height="31.6" rx="2" fill="#2e2e2e"/>
<path d="M48.6 1055.4 V1088.2 M87.4 1055.4 V1088.2" stroke="#5d5d5d" stroke-width="1.2"/>
<circle cx="29.4" cy="1070" r="7.4" fill="#6c6c6c" stroke="#c8c8c8" stroke-width="2"/><rect x="30.4" y="1071.6" width="11.2" height="11" fill="#c8c8c8"/>
<circle cx="67.2" cy="1070" r="7.4" fill="#6c6c6c" stroke="#c8c8c8" stroke-width="2"/><rect x="68.2" y="1071.6" width="11.2" height="11" fill="#c8c8c8"/><path d="M67.2 1070 m-6 0 a6 6 0 0 1 6 -6" fill="none" stroke="#c8c8c8" stroke-width="0"/>
<circle cx="105.4" cy="1070.4" r="7" fill="#5f5f5f" stroke="#676767" stroke-width="1.6"/><rect x="105.6" y="1070.6" width="6.6" height="6.4" fill="#535353"/>
<!-- screen mode -->
<rect x="49" y="1113" width="24.6" height="21.4" fill="#6c6c6c" stroke="#c0c0c0" stroke-width="2.2"/><rect x="48" y="1112" width="26.6" height="4" fill="#c0c0c0"/>
<rect x="64.2" y="1106" width="24.8" height="20.6" fill="#6c6c6c" stroke="#c8c8c8" stroke-width="2.2"/><rect x="63.2" y="1105" width="26.8" height="4.6" fill="#c8c8c8"/>
<!-- more -->
<circle cx="59" cy="1181" r="3.4" fill="#c8c8c8"/><circle cx="69" cy="1181" r="3.4" fill="#c8c8c8"/><circle cx="79" cy="1181" r="3.4" fill="#c8c8c8"/>
</svg>
<span class="t" style="left:38.5px;top:913px;font-size:27px;color:#dde6f2;">?</span>
<!-- ===== right icon dock ===== -->
<svg style="left:2370px;top:0" width="80" height="1220" viewBox="2370 0 80 1220">
<defs>
<linearGradient id="dg1" x1="0" x2="1" y1="0" y2="0"><stop offset="0" stop-color="#2f2f2f"/><stop offset="0.55" stop-color="#8a8a8a"/><stop offset="0.8" stop-color="#bcbcbc"/><stop offset="0.92" stop-color="#e4e4e4"/><stop offset="1" stop-color="#c4c4c4"/></linearGradient>
<clipPath id="qc"><path d="M2397.6 242 A28 28 0 0 1 2425.8 269 L2397.6 269 Z"/></clipPath>
<g id="ssq"><rect x="2399.6" y="1129.8" width="11.4" height="9.8" fill="#535353" stroke="#c4c4c4" stroke-width="1.9"/><rect x="2395.9" y="1125.4" width="10.2" height="9.2" fill="#4c4c4c" stroke="#c4c4c4" stroke-width="1.9"/></g>
<g id="pil"><path d="M2419 1006.6 V1033.6 H2416.6 V1009 H2414 V1033.6 H2411.4 V1021.6 C2403 1022.6 2398.8 1018 2399.6 1013.2 C2400.4 1008.6 2404.4 1006.6 2409 1006.6 Z" fill="#c4c4c4"/></g>
</defs>
<g fill="#c8c8c8">
<!-- color palette -->
<path d="M2407.4 190.4 C2413 186.8 2424.4 188.4 2428.4 196.4 C2431.6 203.2 2428.4 211.6 2418.4 214.6 C2408.4 217.4 2396 214.8 2393.4 207.2 C2391.6 201.4 2396.6 198.2 2402 198.6 C2407 199 2409.6 197 2408 193.6 C2407.4 192.4 2406.8 191.4 2407.4 190.4 Z"/>
<g fill="#5e5e5e"><circle cx="2401.2" cy="206.4" r="3"/><circle cx="2409.8" cy="208.8" r="3"/><circle cx="2417.8" cy="207.8" r="2.7"/><circle cx="2423" cy="203.2" r="2.4"/><rect x="2419.2" y="195.6" width="4.2" height="3.6"/></g>
<!-- colour guide -->
<g clip-path="url(#qc)">
<path d="M2397.6 269 L2397.6 240 L2404 240 Z" fill="#2c2c2c"/>
<path d="M2397.6 269 L2404 240 L2411 240 L2411 244 Z" fill="#4a4a4a"/>
<path d="M2397.6 269 L2411 244 L2419 248 Z" fill="#6a6a6a"/>
<path d="M2397.6 269 L2419 248 L2425 256 Z" fill="#8e8e8e"/>
<path d="M2397.6 269 L2425 256 L2428 263 Z" fill="#b2b2b2"/>
<path d="M2397.6 269 L2428 263 L2428 270 Z" fill="#e6e6e6"/>
</g>
<path d="M2397.4 241.6 V269.4 H2426.4" fill="none" stroke="#cdcdcd" stroke-width="1.8"/>
<path d="M2397.6 242 A28 28 0 0 1 2425.8 269" fill="none" stroke="#b6b6b6" stroke-width="1.3"/>
<!-- swatches -->
<rect x="2395.8" y="325.7" width="28.6" height="18.8" fill="#8a8a8a" stroke="#c2c2c2" stroke-width="1.8"/>
<rect x="2396.8" y="326.8" width="8.4" height="7.6" fill="#7e7e7e"/><rect x="2406.4" y="326.8" width="7.2" height="7.6" fill="#bdbdbd"/><rect x="2414.8" y="326.8" width="8.6" height="7.6" fill="#767676"/>
<rect x="2396.8" y="336" width="8.4" height="7.6" fill="#787878"/><rect x="2406.4" y="336" width="7.2" height="7.6" fill="#8c8c8c"/><rect x="2414.8" y="336" width="8.6" height="7.6" fill="#888888"/>
<path d="M2396 335.2 H2424.4 M2405.8 326 V344.4 M2414.2 326 V344.4" stroke="#b4b4b4" stroke-width="1.2" fill="none"/>
<!-- brushes -->
<rect x="2402.3" y="393.4" width="17" height="12.8" rx="2"/>
<path d="M2404.6 394 L2400.6 386.6 M2410 394 L2408.4 378 M2415.4 394 L2419 383" stroke="#c8c8c8" stroke-width="2" fill="none"/>
<path d="M2398 376.4 C2402 380 2404 384 2402.4 388.6 C2398 388 2395.6 383 2398 376.4 Z"/>
<path d="M2406.4 368.8 H2409.8 V372.6 H2412 V379.6 H2404.6 V372.6 H2406.4 Z"/>
<path d="M2415 379.8 C2419 375 2426.6 377.4 2427.6 383.8 C2424 381.8 2419.6 382.4 2417.8 384.6 Z"/>
<!-- symbols (club) -->
<circle cx="2411" cy="430.6" r="7.1"/><circle cx="2402.6" cy="441.2" r="7.1"/><circle cx="2419.4" cy="441.2" r="7.1"/>
<path d="M2409.4 436 H2412.6 C2412.6 446 2413.6 452 2421.6 454 V455.6 H2400.8 V454 C2408.4 452 2409.4 446 2409.4 436 Z"/>
<!-- stroke -->
<rect x="2394.9" y="506" width="32.3" height="3" fill="#adadad"/><rect x="2394.9" y="513.7" width="32.3" height="4.4"/><rect x="2394.9" y="523.6" width="32.3" height="5.8"/>
<!-- gradient -->
<rect x="2395.9" y="560.4" width="30.3" height="20.8" fill="url(#dg1)" stroke="#c4c4c4" stroke-width="2"/>
<!-- transparency -->
<circle cx="2404.7" cy="620.6" r="11.8"/>
<circle cx="2414.2" cy="630" r="10.8" fill="#7c7c7c" stroke="#c8c8c8" stroke-width="1.6"/>
<path d="M2404.8 632.2 C2411 633 2416 628 2416.2 620" fill="none" stroke="#8c8c8c" stroke-width="2.6"/>
<!-- appearance -->
<circle cx="2411" cy="702.4" r="11.4"/>
<circle cx="2411" cy="702.4" r="15.4" fill="none" stroke="#c8c8c8" stroke-width="2" stroke-dasharray="3.3 2.75"/>
<!-- graphic styles -->
<rect x="2402.2" y="742.8" width="23.8" height="24.2" fill="none" stroke="#c4c4c4" stroke-width="2"/>
<rect x="2399.5" y="760" width="11.4" height="10.6" fill="#535353" stroke="#c4c4c4" stroke-width="2"/>
<rect x="2396.4" y="756.2" width="8" height="8.2" fill="#484848" stroke="#c4c4c4" stroke-width="1.8"/>
<!-- asset export -->
<path d="M2409.6 821.5 H2396.8 V847.2 H2423.4 V834.6" fill="none" stroke="#c4c4c4" stroke-width="3.5"/>
<path d="M2414.6 817.6 H2427 V830.4 M2426.4 818.2 L2415.4 829" fill="none" stroke="#c8c8c8" stroke-width="3.3"/>
<!-- artboards -->
<rect x="2393.7" y="870.1" width="18.8" height="23.6" fill="none" stroke="#c4c4c4" stroke-width="1.8"/>
<rect x="2402.2" y="882.7" width="23.8" height="18.8" fill="#535353" stroke="#c4c4c4" stroke-width="2"/>
<!-- character -->
<rect x="2422.8" y="948" width="1.9" height="33.6" fill="#bdbdbd"/>
<!-- paragraph -->
<use href="#pil"/>
<!-- character styles -->
<use href="#ssq"/>
<!-- paragraph styles -->
<g transform="translate(6.3,156) translate(2412.5,1020) scale(0.93,0.89) translate(-2412.5,-1020)"><use href="#pil"/></g>
<use href="#ssq" y="53"/>
</g>
</svg>
<span class="t" style="left:2396.4px;top:947.2px;font-size:35px;color:#c8c8c8;">A</span>
<span class="t" style="left:2409px;top:1105.4px;font-size:30px;color:#c8c8c8;">A</span>
<span class="t" style="left:2395.6px;top:1049.6px;font-size:45px;font-family:'Liberation Serif',serif;font-style:italic;color:#b6b6b6;transform:scaleX(0.86);transform-origin:0 0;">O</span>
<span class="t" style="left:171.6px;top:26.9px;font-size:22px;font-weight:400;color:#dcdcdc;letter-spacing:-0.35px">File</span>
<span class="t" style="left:234.5px;top:26.9px;font-size:22px;font-weight:400;color:#dcdcdc;letter-spacing:0.19px">Edit</span>
<span class="t" style="left:300.0px;top:26.9px;font-size:22px;font-weight:400;color:#dcdcdc;letter-spacing:0.68px">Object</span>
<span class="t" style="left:394.7px;top:26.9px;font-size:22px;font-weight:400;color:#dcdcdc;letter-spacing:0.13px">Type</span>
<span class="t" style="left:470.5px;top:26.9px;font-size:22px;font-weight:400;color:#dcdcdc;letter-spacing:-0.13px">Select</span>
<span class="t" style="left:559.0px;top:26.9px;font-size:22px;font-weight:400;color:#dcdcdc;letter-spacing:0.23px">Effect</span>
<span class="t" style="left:643.0px;top:26.9px;font-size:22px;font-weight:400;color:#dcdcdc;letter-spacing:0.50px">View</span>
<span class="t" style="left:718.0px;top:26.9px;font-size:22px;font-weight:400;color:#dcdcdc;letter-spacing:1.23px">Window</span>
<span class="t" style="left:827.6px;top:26.9px;font-size:22px;font-weight:400;color:#dcdcdc;letter-spacing:0.85px">Help</span>
<span class="t" style="left:33.7px;top:92.9px;font-size:19px;font-weight:400;color:#e9e9e9;letter-spacing:0.20px">Image</span>
<i class="du" style="left:34px;top:114px;width:54px"></i>
<span class="t" style="left:183.3px;top:92.9px;font-size:19px;font-weight:400;color:#e9e9e9;letter-spacing:-0.13px">image.png</span>
<i class="du" style="left:183px;top:114px;width:88px"></i>
<span class="t" style="left:289.5px;top:94.0px;font-size:18.5px;font-weight:400;color:#b9b9b9;letter-spacing:-0.27px">Transparent RGB</span>
<span class="t" style="left:449.6px;top:94.0px;font-size:18.5px;font-weight:400;color:#b9b9b9;letter-spacing:0.07px">PPI: 72</span>
<span class="t" style="left:569.0px;top:92.9px;font-size:19px;font-weight:400;color:#e9e9e9;letter-spacing:-0.40px">Unembed</span>
<span class="t" style="left:700.0px;top:92.9px;font-size:19px;font-weight:400;color:#747474;letter-spacing:-0.04px">Edit In Photoshop</span>
<span class="t" style="left:907.5px;top:92.9px;font-size:19px;font-weight:400;color:#e9e9e9;letter-spacing:-0.18px">Image Trace</span>
<span class="t" style="left:1100.4px;top:92.9px;font-size:19px;font-weight:400;color:#e9e9e9;letter-spacing:-0.70px">Mask</span>
<span class="t" style="left:1211.0px;top:92.9px;font-size:19px;font-weight:400;color:#e9e9e9;letter-spacing:-0.08px">Crop Image</span>
<span class="t" style="left:1361.0px;top:92.9px;font-size:19px;font-weight:400;color:#e9e9e9;letter-spacing:0.04px">Opacity:</span>
<i class="du" style="left:1361px;top:114px;width:70px"></i>
<span class="t" style="left:1449.0px;top:92.9px;font-size:19px;font-weight:400;color:#e9e9e9;letter-spacing:0.13px">100%</span>
<span class="t" style="left:2008.0px;top:92.9px;font-size:19px;font-weight:400;color:#e9e9e9;letter-spacing:-0.15px">Transform</span>
<i class="du" style="left:2008px;top:114px;width:85px"></i>
<span class="t" style="left:159.4px;top:153.5px;font-size:19.5px;font-weight:700;color:#f0f0f0;letter-spacing:1.07px">image.png* @ 45.86 % (RGB/CPU Preview)</span>
<span class="t" style="left:2435.7px;top:29.5px;font-size:22.5px;font-weight:400;color:#ffffff;letter-spacing:-0.56px;-webkit-text-stroke:0.45px #ffffff">Share</span>
<span class="t" style="left:2468.0px;top:173.6px;font-size:19px;font-weight:400;color:#f0f0f0;letter-spacing:-0.67px;-webkit-text-stroke:0.45px #f0f0f0">Layers</span>
<span class="t" style="left:2558.0px;top:173.6px;font-size:19px;font-weight:400;color:#bdbdbd;letter-spacing:0.22px;-webkit-text-stroke:0.45px #bdbdbd">Properties</span>
<span class="t" style="left:2684.0px;top:173.6px;font-size:19px;font-weight:400;color:#bdbdbd;letter-spacing:-0.11px;-webkit-text-stroke:0.45px #bdbdbd">Libraries</span>
<span class="t" style="left:2526.0px;top:241.8px;font-size:21px;font-weight:400;color:#626262;letter-spacing:-0.02px">Search All</span>
<span class="t" style="left:2642.0px;top:301.0px;font-size:19.5px;font-weight:400;color:#f0f0f0;letter-spacing:-0.72px">Layer 1</span>
</body>
</html>
